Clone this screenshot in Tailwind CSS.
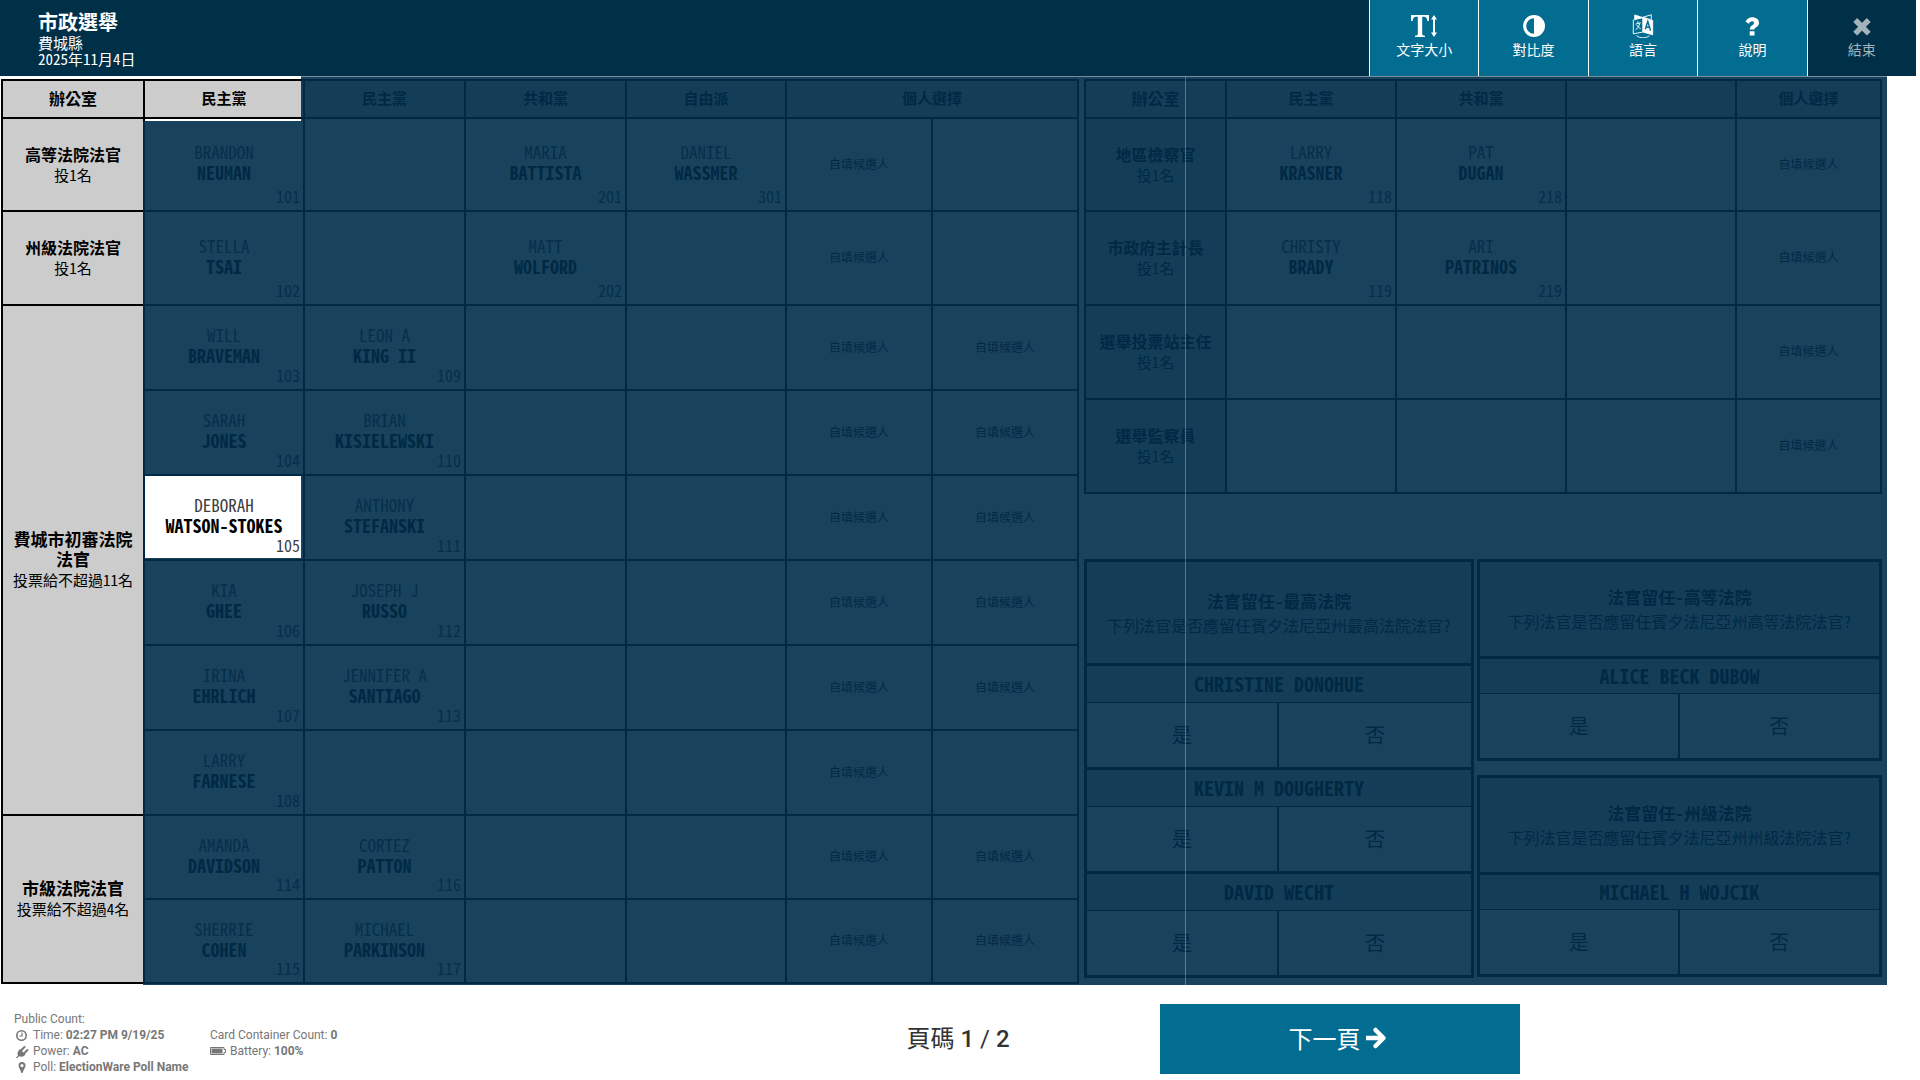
<!DOCTYPE html>
<html lang="zh-Hant">
  <head>
    <meta charset="UTF-8" />
    <meta name="viewport" content="width=device-width, initial-scale=1.0" />
    <title>市政選舉</title>
    <script src="https://cdn.jsdelivr.net/npm/@tailwindcss/browser@4"></script>
  </head>
  <body
    class="bg-white text-black font-['Noto_Sans_Mono_CJK_TC','Liberation_Mono','Noto_Sans_CJK_TC',monospace]"
  >
    <!-- Header -->
    <header class="mr-1 flex h-[76px] justify-between bg-[#003047] text-white">
      <div class="pt-[9px] pl-[38px]">
        <h1 class="text-[20px] leading-[26px] font-bold">市政選舉</h1>
        <p class="text-[15px] leading-4">費城縣</p>
        <p class="text-[15px] leading-4">2025年11月4日</p>
      </div>
      <nav class="grid w-[547px] grid-cols-5 text-[14px] leading-[22px]">
        <button class="flex flex-col items-center border-l border-white bg-[#036c91] pt-[14px]">
          <svg class="h-6 w-[26px]" viewBox="0 0 26 24" fill="currentColor">
            <path d="M0 1h18v6h-1.600c-.5-3-1.400-4.200-3.400-4.200h-1.800v17c0 1.400.6 1.800 2.800 2V23H4v-1.200c2.200-.2 2.800-.6 2.800-2v-17H5C3 2.800 2.100 4 1.600 7H0z" />
            <path d="M23 1l3 4.500h-2v13h2L23 23l-3-4.500h2v-13h-2z" />
          </svg>
          文字大小
        </button>
        <button class="flex flex-col items-center border-l border-white bg-[#036c91] pt-[14px]">
          <svg class="size-6" viewBox="0 0 24 24" fill="currentColor">
            <path fill-rule="evenodd" d="M12 1a11 11 0 1 1 0 22a11 11 0 0 1 0-22zM12 4.200a7.800 7.800 0 0 0 0 15.600z" />
          </svg>
          對比度
        </button>
        <button class="flex flex-col items-center border-l border-white bg-[#036c91] pt-[14px]">
          <svg class="h-6 w-6" viewBox="0 0 24 26" fill="none" stroke="currentColor">
            <path d="M1.500 6.500L12 3.500v16L1.500 21.500z" />
            <path fill="currentColor" d="M3 5.500V1l9 3z" />
            <path d="M12 3.500L21 .8V6M5 23.500c4 3 10 3 14 0" />
            <path d="M4 11l5.500-1.500M6.500 8v2.500M8.500 10c-.5 3-2 5.500-4.500 7M5.500 12c1 2 2.500 3.500 4 4" />
            <path fill="currentColor" d="M12 3.500l10.500 3.500v15.500L12 19.500z" />
            <path stroke="#036c91" stroke-width="1.600" d="M14.500 16.500l2.700-8.500 3 10M15.500 13.800l3.800.8" />
          </svg>
          語言
        </button>
        <button class="flex flex-col items-center border-l border-white bg-[#036c91] pt-[14px]">
          <svg class="size-6" viewBox="0 0 24 24" fill="currentColor">
            <path d="M5.500 7.800C6.800 4.800 9 3.200 12.300 3.200c3.800 0 6.700 2.300 6.700 5.500 0 4.300-4.600 4.500-4.600 6.800H9.800c0-4.300 4.200-4.300 4.200-6.600 0-1-.8-1.600-1.900-1.600-1.300 0-2.200.7-3.200 2.400zM9.700 17.200h4.800v4.300H9.700z" />
          </svg>
          說明
        </button>
        <button class="flex flex-col items-center border-l border-white pt-[14px] text-[#a3b3bb]" disabled>
          <svg class="size-6" viewBox="0 0 24 24" fill="none" stroke="currentColor" stroke-width="5.500">
            <path d="M5.200 6l13.600 13.600M18.800 6L5.200 19.600" />
          </svg>
          結束
        </button>
      </nav>
    </header>

    <!-- Ballot -->
    <main class="relative mr-[33px] grid grid-cols-[1078fr_798fr] items-start gap-[5px] pt-[3px] pr-[5px] pb-px pl-px">
      <table class="w-full table-fixed border-collapse">
        <colgroup>
          <col class="w-[142px]" />
          <col class="w-[160px]" />
          <col class="w-[161px]" />
          <col class="w-[161px]" />
          <col class="w-[160px]" />
          <col />
          <col />
        </colgroup>
        <thead>
          <tr class="h-[38px] bg-[#ccc] text-[15px] leading-5">
            <th class="border-2 p-0 pb-[3px] text-[16px]">辦公室</th>
            <th class="border-2 p-0 pb-[3px]">民主黨</th>
            <th class="border-2 p-0 pb-[3px]">民主黨</th>
            <th class="border-2 p-0 pb-[3px]">共和黨</th>
            <th class="border-2 p-0 pb-[3px]">自由派</th>
            <th class="border-2 p-0 pb-[3px]" colspan="2">個人選擇</th>
          </tr>
        </thead>
        <tbody id="courts"></tbody>
      </table>

      <div>
        <table class="w-full table-fixed border-collapse">
          <colgroup>
            <col class="w-[141px]" />
            <col class="w-[170px]" />
            <col class="w-[170px]" />
            <col class="w-[170px]" />
            <col />
          </colgroup>
          <thead>
            <tr class="h-[38px] bg-[#ccc] text-[15px] leading-5">
              <th class="border-2 p-0 pb-[3px] text-[16px]">辦公室</th>
              <th class="border-2 p-0 pb-[3px]">民主黨</th>
              <th class="border-2 p-0 pb-[3px]">共和黨</th>
              <th class="border-2 p-0 pb-[3px]"></th>
              <th class="border-2 p-0 pb-[3px]">個人選擇</th>
            </tr>
          </thead>
          <tbody id="city"></tbody>
        </table>

        <!-- Retention questions -->
        <div class="mt-[65px] grid grid-cols-[390fr_405fr] items-start gap-[3px]">
          <div id="supreme"></div>
          <div id="appeals" class="flex flex-col gap-[14px]"></div>
        </div>
      </div>

      <!-- Dimmer with openings for the office column and the current choice -->
      <div
        class="pointer-events-none absolute inset-0 border-t border-white/40 bg-[#002d4c]/90 [clip-path:polygon(301px_0,100%_0,100%_100%,143px_100%,143px_482px,301px_482px,301px_400px,145px_400px,145px_482px,143px_482px,143px_45px,301px_45px)]"
      >
        <div class="absolute inset-y-0 left-[1185px] w-px bg-white/30"></div>
      </div>
    </main>

    <!-- Footer -->
    <footer class="mr-1 grid grid-cols-[1fr_auto_1fr] items-center pt-[18px]">
      <div class="mt-2 grid grid-cols-[196px_1fr] self-start pl-[14px] font-[Roboto] text-[12px] leading-4 text-[#777]">
        <p class="col-span-2">Public Count:</p>
        <p class="flex items-center">
          <svg class="mr-1 size-[15px]" viewBox="0 0 15 15" fill="none" stroke="currentColor" stroke-width="1.600">
            <circle cx="7.500" cy="7.500" r="4.700" />
            <path stroke-width="1.200" d="M8 4.500V8H5.500" />
          </svg>
          <span>Time: <b>02:27 PM 9/19/25</b></span>
        </p>
        <p>Card Container Count: <b>0</b></p>
        <p class="flex items-center">
          <svg class="mr-1 size-[15px]" viewBox="0 0 15 15" fill="currentColor">
            <path d="M2 13.500l2-2C3 9.500 3.500 8 5 6L6 5 11.500 10.500l-1 1c-1.500 1.300-3.800 1.500-5.500.7l-2 2z" />
            <path stroke="currentColor" stroke-width="2" stroke-linecap="round" d="M7.500 6L10.500 3M10.500 9l3-3" />
          </svg>
          <span>Power: <b>AC</b></span>
        </p>
        <p class="flex items-center">
          <svg class="mr-1 h-[10px] w-4" viewBox="0 0 16 10">
            <path fill="none" stroke="currentColor" d="M.5 1.500h13.500v2h1.500v3h-1.500v2H.500z" />
            <path fill="currentColor" d="M1.500 2.500h11v5h-11z" />
          </svg>
          <span>Battery: <b>100%</b></span>
        </p>
        <p class="flex items-center">
          <svg class="mr-1 size-[15px]" viewBox="0 0 15 15" fill="currentColor">
            <path fill-rule="evenodd" d="M8 2a3.500 3.500 0 0 1 3.500 3.500C11.500 7.500 9.500 10 8.800 12.400c-.3.700-1.300.7-1.600 0C6.500 10 4.500 7.500 4.500 5.500A3.500 3.500 0 0 1 8 2zM8 4a1.600 1.600 0 1 0 0 3.200A1.600 1.600 0 0 0 8 4z" />
          </svg>
          <span>Poll: <b>ElectionWare Poll Name</b></span>
        </p>
      </div>
      <p class="font-[Roboto,'Noto_Sans_CJK_TC',sans-serif] text-[24px] leading-8 text-[#333]">
        頁碼 <span class="font-medium">1</span> / <span class="font-medium">2</span>
      </p>
      <button class="ml-[150px] flex h-[70px] w-[360px] items-center justify-center bg-[#036c91] pr-1 pb-[2px] text-[24px] text-white">
        下一頁
        <svg class="ml-1 h-6 w-[22px]" viewBox="0 0 22 24" fill="none" stroke="currentColor" stroke-width="4.500">
          <path stroke-linecap="round" stroke-linejoin="round" d="M10.500 4l8 8-8 8" />
          <path d="M1 12h16" />
        </svg>
      </button>
    </footer>

    <script>
      const WRITE_IN = "自填候選人";

      // cell: [first, last, number], WRITE_IN or null
      const courts = [
        { office: "高等法院法官", vote: "投1名", height: "h-[91px]", size: "text-[16px]", rows: [
          [["BRANDON", "NEUMAN", 101], null, ["MARIA", "BATTISTA", 201], ["DANIEL", "WASSMER", 301], WRITE_IN, null],
        ] },
        { office: "州級法院法官", vote: "投1名", height: "h-[92px]", size: "text-[16px]", rows: [
          [["STELLA", "TSAI", 102], null, ["MATT", "WOLFORD", 202], null, WRITE_IN, null],
        ] },
        { office: "費城市初審法院法官", vote: "投票給不超過11名", height: "h-[83px]", size: "text-[17px]", rows: [
          [["WILL", "BRAVEMAN", 103], ["LEON A", "KING II", 109], null, null, WRITE_IN, WRITE_IN],
          [["SARAH", "JONES", 104], ["BRIAN", "KISIELEWSKI", 110], null, null, WRITE_IN, WRITE_IN],
          [["DEBORAH", "WATSON-STOKES", 105], ["ANTHONY", "STEFANSKI", 111], null, null, WRITE_IN, WRITE_IN],
          [["KIA", "GHEE", 106], ["JOSEPH J", "RUSSO", 112], null, null, WRITE_IN, WRITE_IN],
          [["IRINA", "EHRLICH", 107], ["JENNIFER A", "SANTIAGO", 113], null, null, WRITE_IN, WRITE_IN],
          [["LARRY", "FARNESE", 108], null, null, null, WRITE_IN, null],
        ] },
        { office: "市級法院法官", vote: "投票給不超過4名", height: "h-[82px]", size: "text-[17px]", rows: [
          [["AMANDA", "DAVIDSON", 114], ["CORTEZ", "PATTON", 116], null, null, WRITE_IN, WRITE_IN],
          [["SHERRIE", "COHEN", 115], ["MICHAEL", "PARKINSON", 117], null, null, WRITE_IN, WRITE_IN],
        ] },
      ];

      const city = [
        { office: "地區檢察官", vote: "投1名", height: "h-[91px]", size: "text-[16px]", rows: [
          [["LARRY", "KRASNER", 118], ["PAT", "DUGAN", 218], null, WRITE_IN],
        ] },
        { office: "市政府主計長", vote: "投1名", height: "h-[92px]", size: "text-[16px]", rows: [
          [["CHRISTY", "BRADY", 119], ["ARI", "PATRINOS", 219], null, WRITE_IN],
        ] },
        { office: "選舉投票站主任", vote: "投1名", height: "h-[92px]", size: "text-[16px]", rows: [
          [null, null, null, WRITE_IN],
        ] },
        { office: "選舉監察員", vote: "投1名", height: "h-[92px]", size: "text-[16px]", rows: [
          [null, null, null, WRITE_IN],
        ] },
      ];

      function cell(c, height) {
        if (!c) {
          return `<td class="border-2 p-0"><div class="${height}"></div></td>`;
        }
        if (c === WRITE_IN) {
          return `<td class="border-2 p-0"><button class="block w-full pb-[2px] text-[12px] ${height}">${c}</button></td>`;
        }
        return `
          <td class="border-2 border-black p-0 text-neutral-700">
            <button class="relative block w-full pb-[5px] text-[17px] leading-5 ${height}">
              <span class="block">${c[0]}</span>
              <b class="block text-[18px] text-black">${c[1]}</b>
              <span class="absolute right-[3px] bottom-1 text-[16px]">${c[2]}</span>
            </button>
          </td>`;
      }

      function renderTable(id, contests) {
        document.getElementById(id).innerHTML = contests
          .map((contest) =>
            contest.rows
              .map((row, i) => {
                const office = `
                  <th rowspan="${contest.rows.length}" class="border-2 bg-[#ccc] p-0 px-2">
                    <span class="block leading-5 ${contest.size}">${contest.office}</span>
                    <span class="block text-[15px] leading-[22px] font-medium">${contest.vote}</span>
                  </th>`;
                return `<tr>${i === 0 ? office : ""}${row
                  .map((c) => cell(c, contest.height))
                  .join("")}</tr>`;
              })
              .join("")
          )
          .join("");
      }

      function question(title, text, judges, headHeight, nameHeight) {
        return `
          <section class="divide-y-3 border-3">
            <div class="flex flex-col items-center justify-center bg-[#ccc] leading-6 ${headHeight}">
              <h2 class="text-[17px] font-bold">${title}</h2>
              <p class="text-[16px]">${text}</p>
            </div>
            ${judges
              .map(
                (judge) => `
            <div>
              <h3 class="flex items-center justify-center border-b bg-[#ccc] text-[20px] font-bold ${nameHeight}">${judge}</h3>
              <div class="grid h-16 grid-cols-2 divide-x-2 text-[20px]">
                <button>是</button>
                <button>否</button>
              </div>
            </div>`
              )
              .join("")}
          </section>`;
      }

      renderTable("courts", courts);
      renderTable("city", city);

      document.getElementById("supreme").innerHTML = question(
        "法官留任-最高法院",
        "下列法官是否應留任賓夕法尼亞州最高法院法官?",
        ["CHRISTINE DONOHUE", "KEVIN M DOUGHERTY", "DAVID WECHT"],
        "h-[104px]",
        "h-[37px]"
      );
      document.getElementById("appeals").innerHTML =
        question(
          "法官留任-高等法院",
          "下列法官是否應留任賓夕法尼亞州高等法院法官?",
          ["ALICE BECK DUBOW"],
          "h-[97px]",
          "h-[35px]"
        ) +
        question(
          "法官留任-州級法院",
          "下列法官是否應留任賓夕法尼亞州州級法院法官?",
          ["MICHAEL H WOJCIK"],
          "h-[97px]",
          "h-[35px]"
        );
    </script>
  </body>
</html>
